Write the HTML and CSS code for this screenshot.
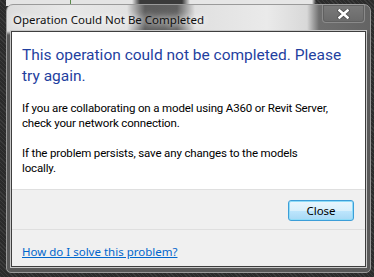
FILE: index.html
```html
<!DOCTYPE html>
<html>
<head>
<meta charset="utf-8">
<link rel="stylesheet" href="styles.css">
</head>
<body>
<div class="window">
  <div class="titlebar">
    <span class="title">Operation Could Not Be Completed</span>
    <div class="closebox">
      <svg width="13" height="10" viewBox="0 0 13 10"><path d="M2.5 1.5 L10.5 8.5 M10.5 1.5 L2.5 8.5" stroke="#4a4a4a" stroke-width="4.2" stroke-linecap="square"/><path d="M2.5 1.5 L10.5 8.5 M10.5 1.5 L2.5 8.5" stroke="#fff" stroke-width="2.6" stroke-linecap="square"/></svg>
    </div>
  </div>
  <div class="client">
    <div class="content">
      <h1 class="instruction">This operation could not be completed. Please try again.</h1>
      <p class="para">If you are collaborating on a model using A360 or Revit Server, check your network connection.</p>
      <p class="para">If the problem persists, save any changes to the models locally.</p>
    </div>
    <div class="buttons">
      <button class="btn">Close</button>
    </div>
    <div class="footer">
      <a class="link" href="#">How do I solve this problem?</a>
    </div>
  </div>
</div>
</body>
</html>
```
FILE: styles.css
```css
html, body {
  margin: 0;
  padding: 0;
}
body {
  width: 374px;
  height: 277px;
  overflow: hidden;
  background:
    linear-gradient(to right, transparent 0 6px, #e4e4e4 6px 70px, #5a8a4a 70px 71px, #e4e4e4 71px 132px, #3a3a3a 140px 182px, #e6e6e6 190px 312px, transparent 316px) top left / 100% 6px no-repeat,
    repeating-linear-gradient(45deg, #3b3b3b 0 1px, #2b2b2b 1px 3px);
  font-family: "Noto Sans", "Open Sans", sans-serif;
  padding: 4px 0 0 6px;
  box-sizing: border-box;
}
.window {
  width: 365px;
  height: 269px;
  border-radius: 7px 7px 5px 5px;
  border: 1px solid #9a9a9a;
  box-sizing: border-box;
  background:
    linear-gradient(to bottom, rgba(255,255,255,0) 0 26px, #585858 30px) ,
    linear-gradient(to right, #dcdcdc 0, #e8e8e8 60px, #e2e2e2 120px, #5c5c5c 138px, #606060 170px, #e0e0e0 188px, #eaeaea 260px, #d8d8d8 300px, #6e6e6e 312px, #646464 100%);
  display: flex;
  flex-direction: column;
  padding: 0 4px 5px 4px;
}
.titlebar {
  height: 26px;
  display: flex;
  align-items: flex-start;
  justify-content: space-between;
  flex: none;
}
.title {
  font-size: 11.5px;
  color: #101010;
  margin: 8px 0 0 2px;
  line-height: 14px;
  text-shadow: 0 0 6px #fff, 0 0 10px #fff;
}
.closebox {
  width: 43px;
  height: 18px;
  margin-right: 1px;
  border: 1px solid #8a8a8a;
  border-top: none;
  border-radius: 0 0 4px 4px;
  background: linear-gradient(#7a7a7a, #6a6a6a);
  box-shadow: inset 0 0 0 1px #606060;
  display: flex;
  align-items: center;
  justify-content: center;
  box-sizing: border-box;
}
.client {
  flex: 1;
  border: 1px solid #3e3e3e;
  box-shadow: 0 0 0 1px #c8c8c8;
  background: #f0f0f0;
  display: flex;
  flex-direction: column;
  font-size: 12px;
}
.content {
  background: #fff;
  padding: 13px 11px 0 10px;
  height: 158px;
  box-sizing: border-box;
  border-bottom: 1px solid #dfdfdf;
}
.instruction {
  margin: 0;
  font-family: Roboto, "Noto Sans", sans-serif;
  font-weight: normal;
  font-size: 15.5px;
  line-height: 21px;
  color: #1f3fa0;
}
.para {
  margin: 14px 0 0 0;
  max-width: 310px;
  font-family: Roboto, "Noto Sans", sans-serif;
  font-size: 11.5px;
  letter-spacing: -0.15px;
  line-height: 15px;
  color: #000;
}
.para + .para {
  margin-top: 15px;
}
.buttons {
  height: 40px;
  border-bottom: 1px solid #dfdfdf;
  display: flex;
  justify-content: flex-end;
  align-items: flex-start;
  padding: 10px 11px 0 0;
  box-sizing: border-box;
}
.btn {
  width: 66px;
  height: 21px;
  border: 1px solid #3c9ed8;
  border-radius: 3px;
  background: linear-gradient(#e9f6fd 0%, #d9f0fc 50%, #bee6fd 51%, #a7d9f5 100%);
  box-shadow: inset 0 0 0 1px #8fdcf8;
  font-family: "Noto Sans", "Open Sans", sans-serif;
  font-size: 11.5px;
  color: #000;
  padding: 0;
  line-height: 17px;
}
.footer {
  flex: 1;
  padding: 13px 10px 0 10px;
}
.link {
  color: #0066cc;
  font-size: 11.5px;
  line-height: 15px;
  text-decoration: underline;
}
```
